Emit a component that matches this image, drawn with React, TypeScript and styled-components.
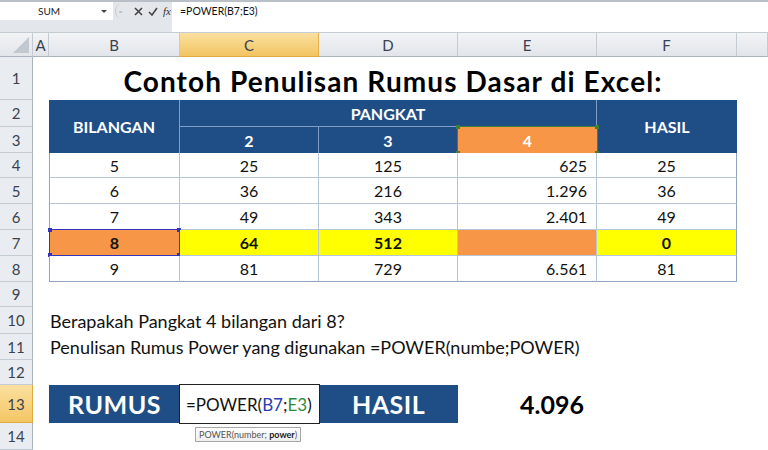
import React from "react";
import styled, { createGlobalStyle, css } from "styled-components";

const colors = {
  navy: "#1f4e87",
  orange: "#f79646",
  yellow: "#ffff00",
  grid: "#b6c5d8",
  frame: "#8ea4c3",
  headLine: "#c5cbd3",
  headEdge: "#aab3be",
  headText: "#3a4250",
  barGray: "#e3e7ec",
};

const GlobalStyle = createGlobalStyle`
  html, body { margin: 0; padding: 0; background: #fff; }
  body {
    width: 768px;
    height: 450px;
    overflow: hidden;
    font-family: Lato, "Open Sans", sans-serif;
    color: #111;
  }
`;

// ---------- formula bar ----------
const FormulaBar = styled.div`
  display: flex;
  height: 33px;
  box-sizing: border-box;
  border-top: 2px solid #b9bfc7;
  border-bottom: 1px solid #c5cbd3;
  background: ${colors.barGray};
`;

const NameArea = styled.div`
  width: 172px;
  display: flex;
  flex-direction: column;
`;

const NameRow = styled.div`
  display: flex;
  height: 18px;
`;

const NameBox = styled.div`
  width: 113px;
  background: #fff;
  display: flex;
  align-items: center;
  justify-content: space-between;
  padding: 0 6px 0 38px;
  box-sizing: border-box;
  font-size: 10px;
  color: #222;
`;

const DropArrow = styled.span`
  width: 0;
  height: 0;
  border-left: 3px solid transparent;
  border-right: 3px solid transparent;
  border-top: 3px solid #444;
`;

const ButtonStrip = styled.div`
  flex: 1;
  display: flex;
  align-items: center;
  gap: 5px;
  padding-left: 2px;
`;

const Grip = styled.span`
  width: 9px;
  height: 14px;
  border-left: 1.5px solid #c3c8cf;
  border-radius: 50% 0 0 50%;
  font-size: 7px;
  color: #aab;
  display: flex;
  align-items: center;
  justify-content: center;
  margin-right: 4px;
`;

const Fx = styled.span`
  font-family: "Liberation Serif", serif;
  font-style: italic;
  font-size: 11px;
  color: #333;
`;

const FormulaInput = styled.div`
  flex: 1;
  background: #fff;
  padding: 3px 0 0 8px;
  font-size: 10.5px;
  color: #111;
`;

// ---------- sheet grid ----------
const Sheet = styled.div`
  display: grid;
  grid-template-columns: 33px 16px 131px 139px 139px 139px 140px 1fr;
  grid-template-rows: 24px 43px 27px 26px 25px 26px 26px 26px 26px 25px 27px 26px 25px 38px 1fr;
  height: 417px;
  background: #fff;
`;

type Place = { $c: number; $r: number; $cs?: number; $rs?: number };

const place = css<Place>`
  grid-column: ${(p) => p.$c} / span ${(p) => p.$cs ?? 1};
  grid-row: ${(p) => p.$r} / span ${(p) => p.$rs ?? 1};
  box-sizing: border-box;
  min-width: 0;
`;

const Corner = styled.div`
  grid-column: 1;
  grid-row: 1;
  background: linear-gradient(#f2f3f5, #e2e6eb);
  border-right: 1px solid ${colors.headLine};
  border-bottom: 1px solid ${colors.headEdge};
  display: flex;
  align-items: flex-end;
  justify-content: flex-end;
  padding: 0 3px 3px 0;
`;

const ColHead = styled.div<{ $c: number; $active?: boolean }>`
  grid-column: ${(p) => p.$c};
  grid-row: 1;
  display: flex;
  align-items: center;
  justify-content: center;
  font-size: 15px;
  color: ${colors.headText};
  background: ${(p) =>
    p.$active ? "linear-gradient(#fbe1a0, #f2c462)" : "linear-gradient(#f3f4f6, #e1e5ea)"};
  border-right: 1px solid ${(p) => (p.$active ? "#e2b04d" : colors.headLine)};
  border-bottom: 1px solid ${(p) => (p.$active ? "#e0a93f" : colors.headEdge)};
`;

const RowHead = styled.div<{ $r: number; $active?: boolean }>`
  grid-column: 1;
  grid-row: ${(p) => p.$r};
  display: flex;
  align-items: center;
  justify-content: center;
  font-size: 15px;
  color: ${colors.headText};
  background: ${(p) => (p.$active ? "linear-gradient(#fbe0a0, #f3c664)" : "#e9ecf0")};
  border-bottom: 1px solid ${(p) => (p.$active ? "#e0a93f" : colors.headLine)};
  border-right: 1px solid ${(p) => (p.$active ? "#e0a93f" : colors.headEdge)};
`;

const Title = styled.div<Place>`
  ${place};
  display: flex;
  align-items: flex-end;
  justify-content: center;
  padding-bottom: 2px;
  font-size: 28px;
  letter-spacing: 1.1px;
  font-weight: 700;
  color: #000;
  white-space: nowrap;
`;

const HeadCell = styled.div<Place & { $bg?: string; $lineRight?: boolean; $lineBottom?: boolean }>`
  ${place};
  position: relative;
  display: flex;
  align-items: center;
  justify-content: center;
  background: ${(p) => p.$bg ?? colors.navy};
  color: #fff;
  font-size: 16px;
  font-weight: 700;
  border-right: ${(p) => (p.$lineRight ? "1px solid #7f9dc7" : "none")};
  border-bottom: ${(p) => (p.$lineBottom ? "1px solid #7f9dc7" : "none")};
`;

type DataProps = Place & {
  $bg?: string;
  $bold?: boolean;
  $right?: boolean;
  $first?: boolean;
  $last?: boolean;
  $bottom?: boolean;
};

const DataCell = styled.div<DataProps>`
  ${place};
  position: relative;
  display: flex;
  align-items: center;
  justify-content: ${(p) => (p.$right ? "flex-end" : "center")};
  padding-right: ${(p) => (p.$right ? "9px" : "0")};
  background: ${(p) => p.$bg ?? "#fff"};
  font-size: 16px;
  font-weight: ${(p) => (p.$bold ? 700 : 400)};
  border-right: 1px solid ${(p) => (p.$last ? colors.frame : colors.grid)};
  border-bottom: 1px solid ${(p) => (p.$bottom ? colors.frame : colors.grid)};
  border-left: ${(p) => (p.$first ? `1px solid ${colors.frame}` : "none")};
`;

const RangeBox = styled.span<{ $color: string }>`
  position: absolute;
  inset: -1px;
  border: 1px solid ${(p) => p.$color};
  pointer-events: none;
`;

const Dot = styled.span<{ $color: string; $x: "left" | "right"; $y: "top" | "bottom" }>`
  position: absolute;
  width: 4px;
  height: 4px;
  background: ${(p) => p.$color};
  ${(p) => p.$x}: -2px;
  ${(p) => p.$y}: -2px;
`;

const Note = styled.div<Place>`
  ${place};
  display: flex;
  align-items: center;
  padding-left: 1px;
  font-size: 18px;
  white-space: nowrap;
`;

const Banner = styled.div<Place>`
  ${place};
  display: flex;
  align-items: center;
  justify-content: center;
  background: ${colors.navy};
  color: #fff;
  font-size: 25px;
  font-weight: 700;
  letter-spacing: 0.5px;
`;

const EditCell = styled.div<Place>`
  ${place};
  position: relative;
  margin: -1px;
  background: #fff;
  border: 1px solid #222;
  display: flex;
  align-items: center;
  padding-left: 6px;
  font-size: 17px;
  white-space: nowrap;
  z-index: 2;
`;

const Ref = styled.span<{ $color: string }>`
  color: ${(p) => p.$color};
`;

const Tip = styled.div`
  position: absolute;
  left: 15px;
  top: calc(100% + 4px);
  padding: 1px 3px;
  font-size: 9px;
  color: #555;
  background: linear-gradient(#ffffff, #eeeeee);
  border: 1px solid #a8a8a8;
  white-space: nowrap;
  b {
    color: #222;
  }
`;

const Result = styled.div<Place>`
  ${place};
  display: flex;
  align-items: center;
  justify-content: flex-end;
  padding-right: 13px;
  font-size: 25px;
  font-weight: 700;
  color: #000;
`;

const rows = [
  { b: "5", c: "25", d: "125", e: "625", f: "25" },
  { b: "6", c: "36", d: "216", e: "1.296", f: "36" },
  { b: "7", c: "49", d: "343", e: "2.401", f: "49" },
  { b: "8", c: "64", d: "512", e: "", f: "0", hit: true },
  { b: "9", c: "81", d: "729", e: "6.561", f: "81" },
];

const Corners: React.FC<{ color: string }> = ({ color }) => (
  <>
    <RangeBox $color={color} />
    <Dot $color={color} $x="left" $y="top" />
    <Dot $color={color} $x="right" $y="top" />
    <Dot $color={color} $x="left" $y="bottom" />
    <Dot $color={color} $x="right" $y="bottom" />
  </>
);

const App: React.FC = () => {
  return (
    <>
      <GlobalStyle />
      <FormulaBar>
        <NameArea>
          <NameRow>
            <NameBox>
              SUM
              <DropArrow />
            </NameBox>
            <ButtonStrip>
              <Grip>=</Grip>
              <svg width="9" height="9" viewBox="0 0 9 9">
                <path d="M1 1 L8 8 M8 1 L1 8" stroke="#444" strokeWidth="1.6" />
              </svg>
              <svg width="10" height="9" viewBox="0 0 10 9">
                <path d="M1 5 L4 8 L9 1" stroke="#444" strokeWidth="1.6" fill="none" />
              </svg>
              <Fx>fx</Fx>
            </ButtonStrip>
          </NameRow>
        </NameArea>
        <FormulaInput>=POWER(B7;E3)</FormulaInput>
      </FormulaBar>

      <Sheet>
        <Corner>
          <svg width="16" height="16" viewBox="0 0 16 16">
            <polygon points="16,0 16,16 0,16" fill="#c2c8cf" />
          </svg>
        </Corner>
        {["A", "B", "C", "D", "E", "F", ""].map((l, i) => (
          <ColHead key={i} $c={i + 2} $active={l === "C"}>
            {l}
          </ColHead>
        ))}
        {Array.from({ length: 14 }, (_, i) => (
          <RowHead key={i} $r={i + 2} $active={i + 1 === 13}>
            {i + 1}
          </RowHead>
        ))}

        <Title $c={3} $r={2} $cs={5}>
          Contoh Penulisan Rumus Dasar di Excel:
        </Title>

        <HeadCell $c={3} $r={3} $rs={2} $lineRight>
          BILANGAN
        </HeadCell>
        <HeadCell $c={4} $r={3} $cs={3} $lineRight $lineBottom>
          PANGKAT
        </HeadCell>
        <HeadCell $c={7} $r={3} $rs={2}>
          HASIL
        </HeadCell>
        <HeadCell $c={4} $r={4} $lineRight>
          2
        </HeadCell>
        <HeadCell $c={5} $r={4} $lineRight>
          3
        </HeadCell>
        <HeadCell $c={6} $r={4} $bg={colors.orange}>
          4
          <Corners color="#3f7f3a" />
        </HeadCell>

        {rows.map((row, i) => {
          const r = i + 5;
          const last = i === rows.length - 1;
          const hit = !!row.hit;
          return (
            <React.Fragment key={r}>
              <DataCell $c={3} $r={r} $first $bottom={last} $bold={hit} $bg={hit ? colors.orange : undefined}>
                {row.b}
                {hit && <Corners color="#3434b8" />}
              </DataCell>
              <DataCell $c={4} $r={r} $bottom={last} $bold={hit} $bg={hit ? colors.yellow : undefined}>
                {row.c}
              </DataCell>
              <DataCell $c={5} $r={r} $bottom={last} $bold={hit} $bg={hit ? colors.yellow : undefined}>
                {row.d}
              </DataCell>
              <DataCell $c={6} $r={r} $bottom={last} $right $bg={hit ? colors.orange : undefined}>
                {row.e}
              </DataCell>
              <DataCell $c={7} $r={r} $last $bottom={last} $bold={hit} $bg={hit ? colors.yellow : undefined}>
                {row.f}
              </DataCell>
            </React.Fragment>
          );
        })}

        <Note $c={3} $r={11} $cs={6}>
          Berapakah Pangkat 4 bilangan dari 8?
        </Note>
        <Note $c={3} $r={12} $cs={6}>
          Penulisan Rumus Power yang digunakan =POWER(numbe;POWER)
        </Note>

        <Banner $c={3} $r={14}>RUMUS</Banner>
        <EditCell $c={4} $r={14}>
          =POWER(<Ref $color="#2b3cb4">B7</Ref>;<Ref $color="#2f8a3c">E3</Ref>)
          <Tip>
            POWER(number; <b>power</b>)
          </Tip>
        </EditCell>
        <Banner $c={5} $r={14}>HASIL</Banner>
        <Result $c={6} $r={14}>4.096</Result>
      </Sheet>
    </>
  );
};

export default App;
